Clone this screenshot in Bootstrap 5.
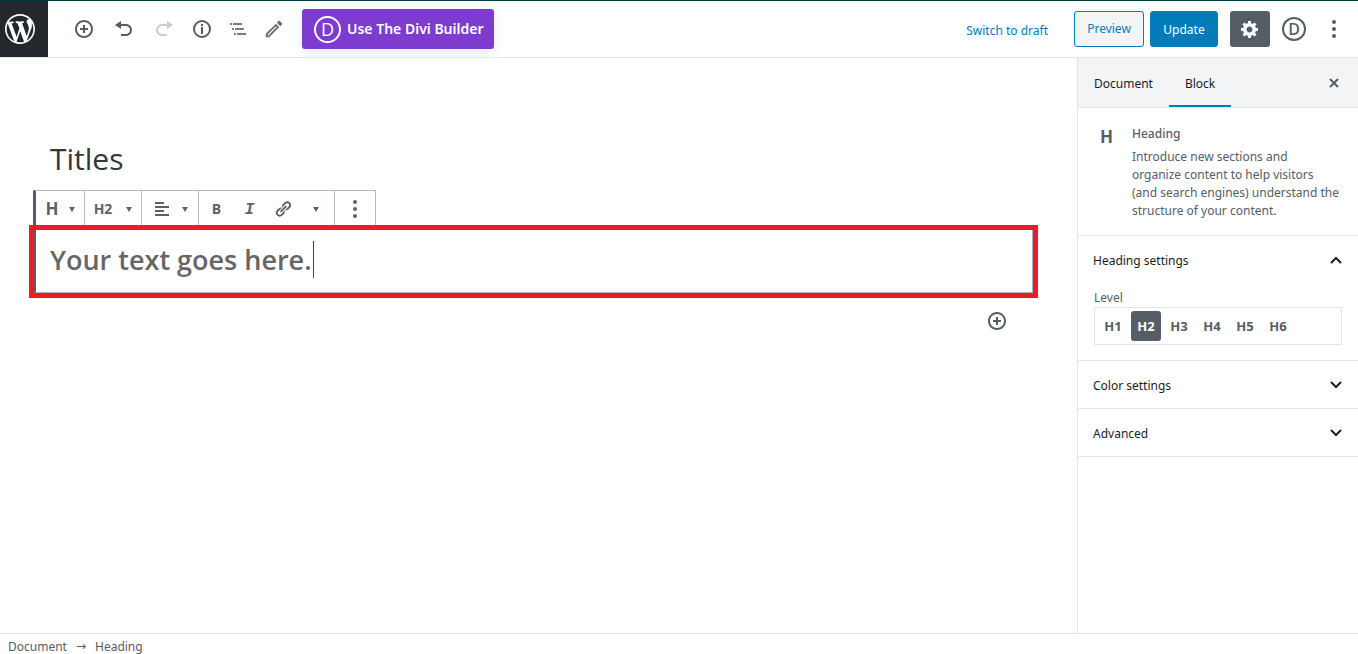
<!DOCTYPE html>
<html lang="en">
<head>
<meta charset="utf-8">
<meta name="viewport" content="width=device-width, initial-scale=1">
<title>Edit Post</title>
<link href="https://cdn.jsdelivr.net/npm/bootstrap@5.3.0/dist/css/bootstrap.min.css" rel="stylesheet">
<style>
:root{--ink:#555d66;--line:#e2e4e7;--blue:#007cba;--dark:#191e23}
body{font-family:"Noto Sans","Open Sans",sans-serif;font-size:12px;line-height:18px;color:var(--ink);background:#fff}
svg{display:block;fill:currentColor}
button{color:inherit;font:inherit}
.topbar{height:58px;border-top:1px solid #003c40;border-bottom:1px solid var(--line)}
.wp-home{width:48px;padding-left:5px;background:#23282d;color:#fff}
.tool{width:36px;height:36px;padding:0;border:0;background:none;display:flex;align-items:center;justify-content:center;flex:none}
.tool.wide{width:40px}
.tool:disabled{opacity:.3}
.tool.gear{height:36px;background:var(--ink);color:#fff;border-radius:3px}
.ring{display:flex;align-items:center;justify-content:center;width:24px;height:24px;border:2px solid;border-radius:50%;font:600 16px/20px "Open Sans",sans-serif}
.btn-divi{height:40px;width:192px;margin-left:10px;padding:0 12px;border:0;border-radius:3px;background:#7e3bd0;color:#fff;font:600 14px/20px "Noto Sans",sans-serif;box-shadow:0 4px 12px #dfeefa;white-space:nowrap;gap:6px}
.btn-divi:hover{background:#7030c0;color:#fff}
.btn-divi .ring{width:27px;height:27px;font-weight:400;font-size:18px;flex:none}
.bar-btn{height:36px;border:1px solid var(--blue);border-radius:3px;font-size:12px;padding:0}
.bar-btn.preview{width:70px;margin-right:6px;background:#f3f5f5;color:var(--blue)}
.bar-btn.update{width:68px;padding-top:2px;background:var(--blue);color:#fff}
.draft{color:var(--blue);margin-right:26px;padding-top:3px;text-decoration:none}
.editor{padding:83px 39px 0 29px}
.post-title{font:400 30px/36px "Open Sans",sans-serif;color:#32373c;margin:0 0 13px 21px}
.blockbar{width:max-content;height:35px;margin-left:4px;border-top:1px solid #b5bcc2;border-left:3px solid var(--ink);color:#5f6265}
.seg{border-right:1px solid #b5bcc2}
.seg button{border:0;background:none;padding:2px 0 0;height:34px;display:flex;align-items:center;justify-content:center}
.seg.formats{padding:0 2px 0 1px}
.w-one{width:48px}.w-two{width:56px}.w-fmt{width:33px}.w-more{width:40px}
.glyph{font:700 14px/20px "Open Sans",sans-serif}
.glyph.big{font-size:17px}
.glyph.slant{font:italic 700 16px/20px "Liberation Mono",monospace;padding-top:2px}
.w-one,.w-two{gap:10px}
.tri{border:3px solid transparent;border-top:5px solid;border-bottom:0}
.marked{border:5px solid #ed1c24}
.block-text{height:63px;padding:10px 0 0 14px;border:solid #a9b3bd;border-width:0 1px 1px 0;border-left:2px solid var(--ink);font:600 27px/40px "Open Sans",sans-serif;color:#666;margin:0;outline:0}
.caret{display:inline-block;width:1px;height:37px;margin-left:1px;background:#444;vertical-align:-8px}
.adder{margin:5px 23px 0 auto}
.side{width:281px;flex:none;border-left:1px solid var(--line);color:var(--ink)}
.tabs{height:50px;background:#f3f4f5;border-bottom:1px solid var(--line);color:var(--dark)}
.tabs .tab{border:0;background:none;height:49px;padding:4px 16px 0;border-bottom:2px solid transparent}
.tabs .tab.active{border-color:var(--blue)}
.tabs .tool{margin-right:6px}
.intro{padding:17px 10px 15px 16px;height:128px;border-bottom:1px solid var(--line)}
.intro .mark-h{width:38px;padding:2px 0 0 6px;font:700 17px/20px "Open Sans",sans-serif}
.intro h2{font-size:12px;line-height:18px;margin:0 0 5px}
.intro p{margin:0}
.fold{width:100%;height:47px;border:0;background:none;color:var(--dark);padding:2px 15px 0;display:flex;justify-content:space-between;align-items:center}
.panel{border-bottom:1px solid var(--line)}
.fold svg{margin-bottom:1px}
.panel-body{padding:6px 16px 15px}
.levels{height:38px;border:1px solid var(--line);padding:3px 3px;gap:3px}
.levels button{width:30px;height:30px;border:0;border-radius:3px;padding:0;background:none;font:700 13px/20px "Open Sans",sans-serif}
.levels .on{background:var(--ink);color:#fff}
.crumbs{border-top:1px solid var(--line);padding:5px 8px 0;line-height:15px;gap:9px}
.crumbs a{color:inherit;text-decoration:none}
.crumbs span{font:12px/15px "DejaVu Sans",sans-serif}
</style>
</head>
<body>
<div class="d-flex flex-column min-vh-100">
<header class="topbar d-flex align-items-center">
  <a class="wp-home h-100 d-flex align-items-center" href="#" aria-label="View posts"><svg width="30" height="30" viewBox="0 0 20 20"><path d="M20 10c0-5.51-4.49-10-10-10C4.48 0 0 4.49 0 10c0 5.52 4.48 10 10 10 5.51 0 10-4.48 10-10zM7.78 15.37L4.37 6.22c.55-.02 1.17-.08 1.17-.08.5-.06.44-1.13-.06-1.11 0 0-1.45.11-2.37.11-.18 0-.37 0-.58-.01C4.12 2.69 6.87 1.11 10 1.11c2.33 0 4.45.87 6.05 2.34-.68-.11-1.65.39-1.65 1.58 0 .74.45 1.36.9 2.1.35.61.55 1.36.55 2.46 0 1.49-1.4 5-1.4 5l-3.03-8.37c.54-.02.82-.17.82-.17.5-.05.44-1.25-.06-1.22 0 0-1.44.12-2.38.12-.87 0-2.33-.12-2.33-.12-.5-.03-.56 1.2-.06 1.22l.92.08 1.26 3.41zM17.41 10c.24-.64.74-1.87.43-4.25.7 1.29 1.05 2.71 1.05 4.25 0 3.29-1.73 6.24-4.4 7.78.97-2.59 1.94-5.2 2.92-7.78zM6.1 18.09C3.12 16.65 1.11 13.53 1.11 10c0-1.3.23-2.48.72-3.59C3.25 10.3 4.67 14.2 6.1 18.09zm4.03-6.63l2.58 6.98c-.86.29-1.76.45-2.71.45-.79 0-1.57-.11-2.29-.33.81-2.38 1.62-4.74 2.42-7.1z"/></svg></a>
  <div class="d-flex align-items-center ms-3">
    <button class="tool wide" aria-label="Add block"><svg width="20" height="20" viewBox="0 0 20 20"><path d="M10 1c-5 0-9 4-9 9s4 9 9 9 9-4 9-9-4-9-9-9zm0 16c-3.900 0-7-3.100-7-7s3.100-7 7-7 7 3.100 7 7-3.100 7-7 7zm1-11H9v3H6v2h3v3h2v-3h3V9h-3V6z"/></svg></button>
    <button class="tool wide" aria-label="Undo"><svg width="20" height="20" viewBox="0 0 20 20"><path d="M12 5H7V2L1 6l6 4V7h5c2.200 0 4 1.800 4 4s-1.800 4-4 4H7v2h5c3.300 0 6-2.700 6-6s-2.700-6-6-6z"/></svg></button>
    <button class="tool wide" aria-label="Redo" disabled><svg width="20" height="20" viewBox="0 0 20 20"><path d="M8 5h5V2l6 4-6 4V7H8c-2.200 0-4 1.800-4 4s1.800 4 4 4h5v2H8c-3.300 0-6-2.700-6-6s2.700-6 6-6z"/></svg></button>
    <button class="tool" aria-label="Content structure"><svg width="20" height="20" viewBox="0 0 20 20"><circle cx="10" cy="10" r="8" fill="none" stroke="currentColor" stroke-width="2"/><path d="M9 5h2v2H9zM9 8h2v7H9z"/></svg></button>
    <button class="tool" aria-label="Block navigation"><svg width="20" height="20" viewBox="0 0 20 20"><path d="M2 4h2v2H2zM5 4h9v2H5zM4 9h2v2H4zM7 9h9v2H7zM6 14h2v2H6zM9 14h9v2H9z" opacity=".8"/></svg></button>
    <button class="tool" aria-label="Edit mode"><svg width="22" height="22" viewBox="0 0 24 24"><path opacity=".9" d="M14.060 9.020l.920.920L5.920 19H5v-.920l9.060-9.060M17.660 3c-.250 0-.510.100-.700.290l-1.830 1.830 3.750 3.750 1.830-1.830c.390-.390.390-1.020 0-1.410l-2.340-2.340c-.200-.200-.450-.290-.710-.290zm-3.600 3.190L3 17.250V21h3.750L17.810 9.940l-3.750-3.750z"/></svg></button>
    <button class="btn btn-divi d-flex align-items-center"><span class="ring">D</span>Use The Divi Builder</button>
  </div>
  <div class="d-flex align-items-center ms-auto pe-1">
    <a class="draft" href="#">Switch to draft</a>
    <button class="btn bar-btn preview">Preview</button>
    <button class="btn bar-btn update me-2">Update</button>
    <button class="tool wide gear ms-1 me-1" aria-label="Settings"><svg width="20" height="20" viewBox="0 0 20 20"><path d="M18 12h-2.180c-.170.700-.440 1.350-.810 1.930l1.540 1.540-2.100 2.100-1.540-1.540c-.580.360-1.230.630-1.910.790V19H8v-2.180c-.680-.160-1.330-.430-1.910-.790l-1.540 1.540-2.120-2.120 1.540-1.540c-.360-.580-.630-1.230-.790-1.910H1V9.030h2.170c.160-.700.440-1.350.800-1.940L2.430 5.550l2.100-2.100 1.540 1.540c.580-.370 1.240-.640 1.930-.810V2h3v2.180c.680.160 1.330.430 1.910.790l1.540-1.540 2.120 2.120-1.540 1.540c.360.590.640 1.240.800 1.940H18V12zm-8.500 1.500c1.660 0 3-1.340 3-3s-1.340-3-3-3-3 1.340-3 3 1.340 3 3 3z"/></svg></button>
    <button class="tool wide" aria-label="Divi options"><span class="ring">D</span></button>
    <button class="tool wide" aria-label="More tools"><svg width="20" height="20" viewBox="0 0 20 20"><circle cx="10" cy="3" r="2"/><circle cx="10" cy="10" r="2"/><circle cx="10" cy="17" r="2"/></svg></button>
  </div>
</header>
<div class="d-flex flex-grow-1">
  <main class="editor flex-grow-1">
    <h1 class="post-title">Titles</h1>
    <div class="blockbar d-flex" role="toolbar" aria-label="Block tools">
      <div class="seg"><button class="w-one" aria-label="Change block type"><span class="glyph big">H</span><span class="tri"></span></button></div>
      <div class="seg"><button class="w-two" aria-label="Heading level"><span class="glyph">H2</span><span class="tri ms-1"></span></button></div>
      <div class="seg"><button class="w-two" aria-label="Align text"><svg width="20" height="20" viewBox="0 0 20 20"><path d="M12 5V3H3v2h9zm5 4V7H3v2h14zm-5 4v-2H3v2h9zm5 4v-2H3v2h14z"/></svg><span class="tri"></span></button></div>
      <div class="seg formats d-flex"><button class="w-fmt" aria-label="Bold"><span class="glyph">B</span></button><button class="w-fmt" aria-label="Italic"><span class="glyph slant">I</span></button><button class="w-fmt" aria-label="Link"><svg width="18" height="18" viewBox="0 0 20 20"><path d="M17.740 2.760c1.680 1.690 1.680 4.410 0 6.100l-1.530 1.520c-1.120 1.120-2.700 1.470-4.140 1.090l2.620-2.610.760-.770.760-.760c.840-.840.840-2.200 0-3.040-.840-.850-2.200-.850-3.040 0l-.770.760-3.380 3.380c-.370-1.440-.020-3.020 1.100-4.140l1.520-1.530c1.690-1.680 4.420-1.680 6.100 0zM8.590 13.430l5.340-5.340c.420-.420.420-1.100 0-1.520-.440-.430-1.130-.390-1.530 0l-5.330 5.340c-.420.420-.420 1.100 0 1.520.440.430 1.130.390 1.520 0zm-.760 2.290l4.140-4.150c.380 1.440.030 3.020-1.090 4.140l-1.520 1.530c-1.690 1.680-4.410 1.680-6.100 0-1.680-1.680-1.680-4.420 0-6.100l1.530-1.520c1.120-1.120 2.700-1.470 4.140-1.100l-4.140 4.150c-.850.840-.850 2.200 0 3.050.840.840 2.200.840 3.040 0z"/></svg></button><button class="w-fmt" aria-label="More rich text controls"><span class="tri"></span></button></div>
      <div class="seg"><button class="w-more" aria-label="More options"><svg width="20" height="20" viewBox="0 0 20 20"><circle cx="10" cy="3" r="2"/><circle cx="10" cy="10" r="2"/><circle cx="10" cy="17" r="2"/></svg></button></div>
    </div>
    <div class="marked"><h2 class="block-text">Your text goes here.<span class="caret"></span></h2></div>
    <button class="tool adder" aria-label="Add block below"><svg width="20" height="20" viewBox="0 0 20 20"><path d="M10 1c-5 0-9 4-9 9s4 9 9 9 9-4 9-9-4-9-9-9zm0 16c-3.900 0-7-3.100-7-7s3.100-7 7-7 7 3.100 7 7-3.100 7-7 7zm1-11H9v3H6v2h3v3h2v-3h3V9h-3V6z"/></svg></button>
  </main>
  <aside class="side">
    <div class="tabs d-flex">
      <button class="tab">Document</button><button class="tab active">Block</button>
      <button class="tool align-self-center ms-auto" aria-label="Close settings"><svg width="24" height="24" viewBox="0 0 24 24"><path d="M8 8l8 8M16 8l-8 8" stroke="#555d66" stroke-width="2"/></svg></button>
    </div>
    <div class="intro d-flex">
      <div class="mark-h flex-shrink-0" aria-hidden="true">H</div>
      <div><h2>Heading</h2><p>Introduce new sections and<br>organize content to help visitors<br>(and search engines) understand the structure of your content.</p></div>
    </div>
    <section class="panel">
      <button class="fold" aria-expanded="true">Heading settings<svg width="14" height="14" viewBox="0 0 14 14"><path d="M2 10l5-5 5 5" fill="none" stroke="currentColor" stroke-width="2"/></svg></button>
      <div class="panel-body"><div id="lvl">Level</div>
        <div class="levels d-flex" role="group" aria-labelledby="lvl"><button>H1</button><button class="on" aria-pressed="true">H2</button><button>H3</button><button>H4</button><button>H5</button><button>H6</button></div>
      </div>
    </section>
    <section class="panel"><button class="fold" aria-expanded="false">Color settings<svg width="14" height="14" viewBox="0 0 14 14"><path d="M2 4l5 5 5-5" fill="none" stroke="currentColor" stroke-width="2"/></svg></button></section>
    <section class="panel"><button class="fold" aria-expanded="false">Advanced<svg width="14" height="14" viewBox="0 0 14 14"><path d="M2 4l5 5 5-5" fill="none" stroke="currentColor" stroke-width="2"/></svg></button></section>
  </aside>
</div>
<footer class="crumbs d-flex"><a href="#">Document</a><span>→</span><a href="#">Heading</a></footer>
</div>
<script src="https://cdn.jsdelivr.net/npm/bootstrap@5.3.0/dist/js/bootstrap.bundle.min.js"></script>
</body>
</html>
